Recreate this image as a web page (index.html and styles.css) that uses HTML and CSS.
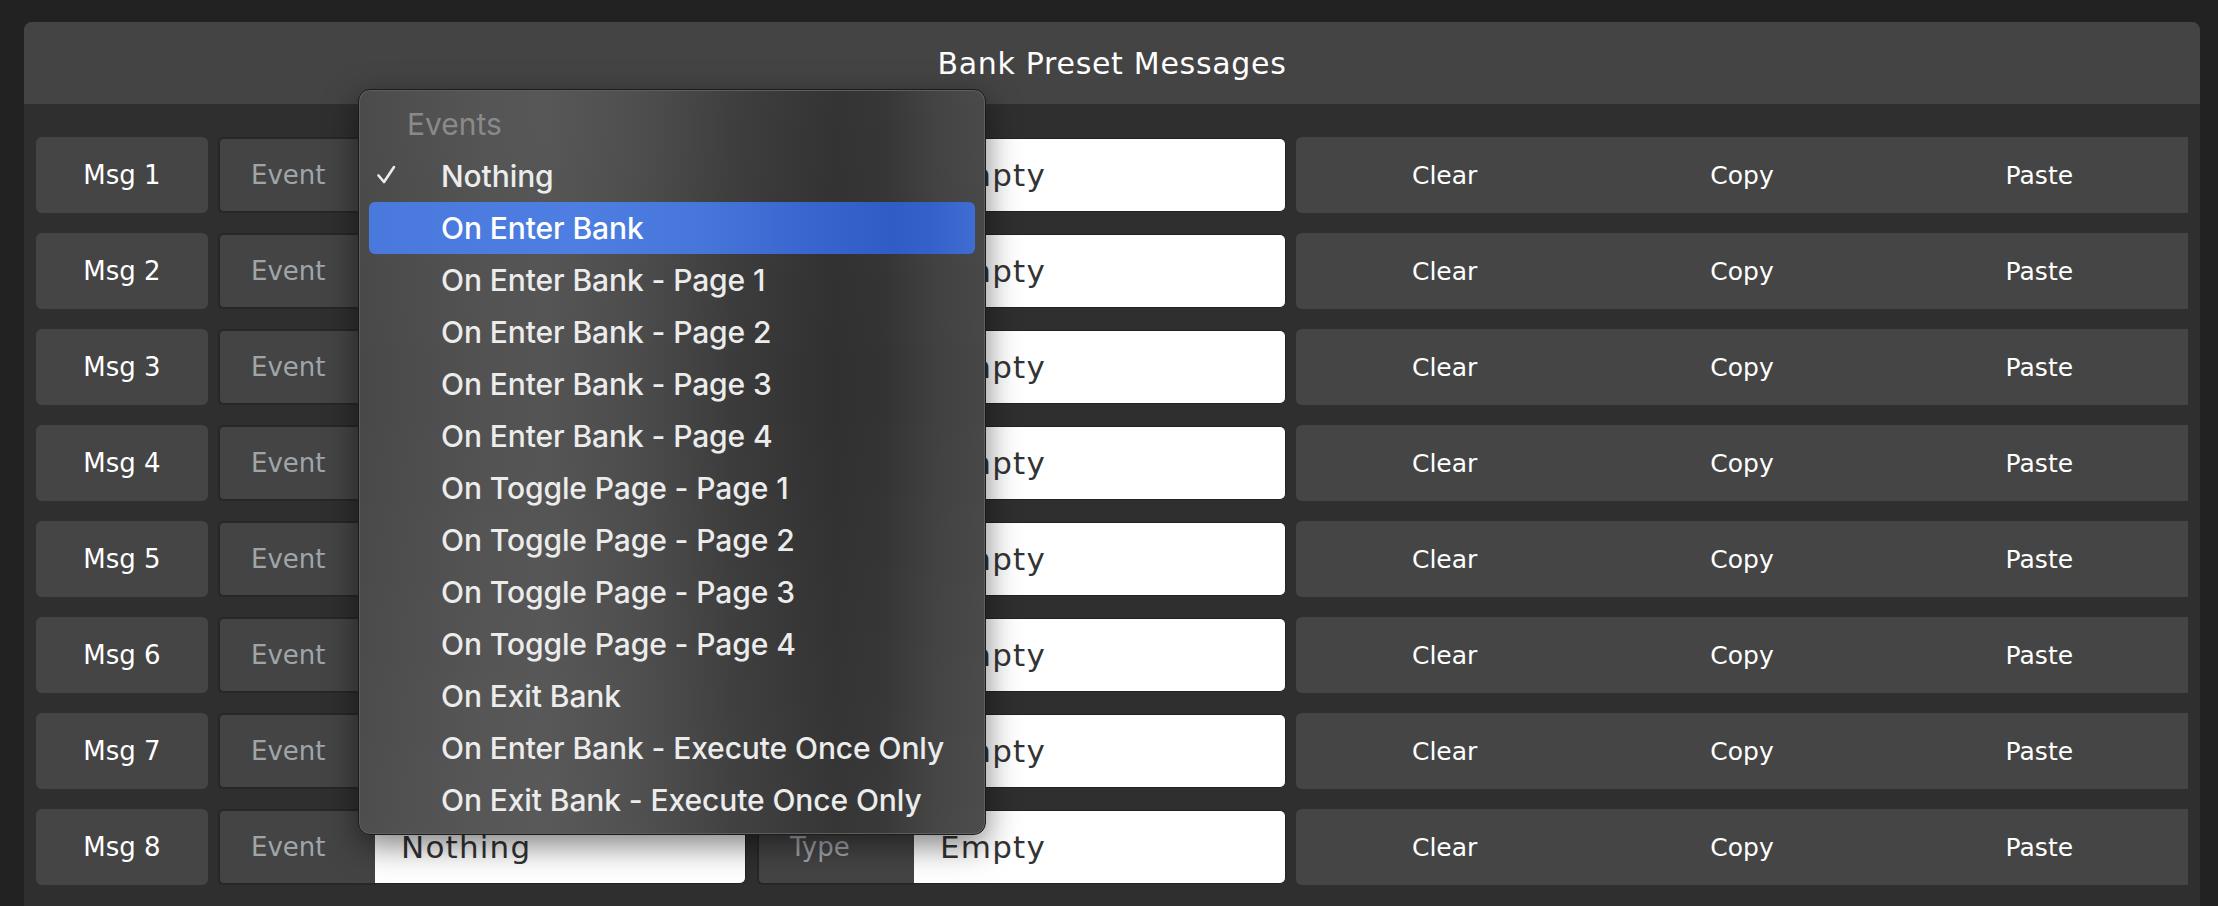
FILE: index.html
```html
<!DOCTYPE html>
<html>
<head>
<meta charset="utf-8">
<title>Bank Preset Messages</title>
<link rel="stylesheet" href="styles.css">
</head>
<body>
<div class="panel">
  <div class="panel-header">Bank Preset Messages</div>
  <div class="panel-body">
    <div class="row">
      <div class="msg-btn">Msg 1</div>
      <div class="group group-event"><div class="label">Event</div><div class="field">Nothing</div></div>
      <div class="group group-type"><div class="label">Type</div><div class="field">Empty</div></div>
      <div class="actions"><div class="act">Clear</div><div class="act">Copy</div><div class="act">Paste</div></div>
    </div>
    <div class="row">
      <div class="msg-btn">Msg 2</div>
      <div class="group group-event"><div class="label">Event</div><div class="field">Nothing</div></div>
      <div class="group group-type"><div class="label">Type</div><div class="field">Empty</div></div>
      <div class="actions"><div class="act">Clear</div><div class="act">Copy</div><div class="act">Paste</div></div>
    </div>
    <div class="row">
      <div class="msg-btn">Msg 3</div>
      <div class="group group-event"><div class="label">Event</div><div class="field">Nothing</div></div>
      <div class="group group-type"><div class="label">Type</div><div class="field">Empty</div></div>
      <div class="actions"><div class="act">Clear</div><div class="act">Copy</div><div class="act">Paste</div></div>
    </div>
    <div class="row">
      <div class="msg-btn">Msg 4</div>
      <div class="group group-event"><div class="label">Event</div><div class="field">Nothing</div></div>
      <div class="group group-type"><div class="label">Type</div><div class="field">Empty</div></div>
      <div class="actions"><div class="act">Clear</div><div class="act">Copy</div><div class="act">Paste</div></div>
    </div>
    <div class="row">
      <div class="msg-btn">Msg 5</div>
      <div class="group group-event"><div class="label">Event</div><div class="field">Nothing</div></div>
      <div class="group group-type"><div class="label">Type</div><div class="field">Empty</div></div>
      <div class="actions"><div class="act">Clear</div><div class="act">Copy</div><div class="act">Paste</div></div>
    </div>
    <div class="row">
      <div class="msg-btn">Msg 6</div>
      <div class="group group-event"><div class="label">Event</div><div class="field">Nothing</div></div>
      <div class="group group-type"><div class="label">Type</div><div class="field">Empty</div></div>
      <div class="actions"><div class="act">Clear</div><div class="act">Copy</div><div class="act">Paste</div></div>
    </div>
    <div class="row">
      <div class="msg-btn">Msg 7</div>
      <div class="group group-event"><div class="label">Event</div><div class="field">Nothing</div></div>
      <div class="group group-type"><div class="label">Type</div><div class="field">Empty</div></div>
      <div class="actions"><div class="act">Clear</div><div class="act">Copy</div><div class="act">Paste</div></div>
    </div>
    <div class="row">
      <div class="msg-btn">Msg 8</div>
      <div class="group group-event"><div class="label">Event</div><div class="field">Nothing</div></div>
      <div class="group group-type"><div class="label">Type</div><div class="field">Empty</div></div>
      <div class="actions"><div class="act">Clear</div><div class="act">Copy</div><div class="act">Paste</div></div>
    </div>
  </div>
</div>

<div class="menu">
  <div class="menu-head">Events</div>
  <div class="menu-item checked"><svg class="check" width="20" height="20" viewBox="0 0 20 20"><path d="M2.5 10.5 L8 17 L18 2" fill="none" stroke="#ececec" stroke-width="2.6" stroke-linecap="round" stroke-linejoin="round"/></svg>Nothing</div>
  <div class="menu-item active">On Enter Bank</div>
  <div class="menu-item">On Enter Bank - Page 1</div>
  <div class="menu-item">On Enter Bank - Page 2</div>
  <div class="menu-item">On Enter Bank - Page 3</div>
  <div class="menu-item">On Enter Bank - Page 4</div>
  <div class="menu-item">On Toggle Page - Page 1</div>
  <div class="menu-item">On Toggle Page - Page 2</div>
  <div class="menu-item">On Toggle Page - Page 3</div>
  <div class="menu-item">On Toggle Page - Page 4</div>
  <div class="menu-item">On Exit Bank</div>
  <div class="menu-item">On Enter Bank - Execute Once Only</div>
  <div class="menu-item">On Exit Bank - Execute Once Only</div>
</div>
</body>
</html>
```

FILE: styles.css
```css
html, body {
  margin: 0;
  padding: 0;
  overflow: hidden;
}
body {
  background: #222222;
  font-family: "DejaVu Sans", "Open Sans", sans-serif;
  height: 906px;
  position: relative;
}
.panel {
  margin: 22px 18px 0 24px;
  height: 884px;
  background: #2f2f2f;
  border-radius: 8px 8px 0 0;
  overflow: hidden;
}
.panel-header {
  height: 82px;
  background: #444444;
  color: #ffffff;
  font-size: 30px;
  letter-spacing: 0.7px;
  display: flex;
  align-items: center;
  justify-content: center;
}
.panel-body {
  padding: 33px 12px 0 12px;
  display: flex;
  flex-direction: column;
  gap: 20px;
}
.row {
  display: flex;
  height: 76px;
}
.msg-btn {
  width: 172px;
  margin-right: 10px;
  background: #454545;
  border-radius: 6px;
  color: #ffffff;
  font-size: 26px;
  display: flex;
  align-items: center;
  justify-content: center;
}
.group {
  display: flex;
}
.group-event {
  width: 528px;
  margin-right: 11px;
}
.group-type {
  width: 529px;
  margin-right: 10px;
}
.label {
  box-sizing: border-box;
  width: 157px;
  padding-left: 31px;
  background: #444444;
  border: 2px solid #272727;
  border-right: none;
  border-radius: 6px 0 0 6px;
  color: #a0a5aa;
  font-size: 26px;
  display: flex;
  align-items: center;
}
.field {
  box-sizing: border-box;
  flex: 1;
  background: #ffffff;
  border: 1px solid #222222;
  border-left: none;
  border-radius: 0 6px 6px 0;
  margin: 1px 0;
  color: #333333;
  font-size: 31px;
  letter-spacing: 1.2px;
  padding-left: 26px;
  display: flex;
  align-items: center;
}
.actions {
  flex: 1;
  display: flex;
  background: #454545;
  border-radius: 6px 0 0 6px;
}
.act {
  flex: 1;
  color: #ffffff;
  font-size: 25px;
  display: flex;
  align-items: center;
  justify-content: center;
}
.menu {
  position: absolute;
  left: 358px;
  top: 89px;
  width: 628px;
  box-sizing: border-box;
  padding: 8px 0 8px 0;
  border-radius: 12px;
  border: 1px solid #1c1c1c;
  box-shadow: inset 0 0 0 1px #5e5e5e, 0 10px 32px rgba(0, 0, 0, 0.5);
  background:
    linear-gradient(180deg, rgba(255,255,255,0.02) 0%, rgba(0,0,0,0) 40%, rgba(255,255,255,0.03) 100%),
    linear-gradient(90deg, #484848 0%, #525252 20%, #545454 30%, #4b4b4b 45%, #3b3b3b 60%, #303030 76%, #333333 84%, #404040 92%, #474747 100%);
  font-family: Inter, "Noto Sans", sans-serif;
  color: #e8e8e8;
}
.menu-head {
  height: 52px;
  padding-left: 48px;
  display: flex;
  align-items: center;
  font-size: 30px;
  color: #8a8a8a;
}
.menu-item {
  position: relative;
  height: 52px;
  padding-left: 82px;
  display: flex;
  align-items: center;
  font-size: 30px;
  font-weight: 500;
  letter-spacing: -0.1px;
  color: #ececec;
}
.menu-item.active {
  margin: 0 10px;
  padding-left: 72px;
  border-radius: 6px;
  color: #ffffff;
  background: linear-gradient(90deg, #4a79dd 0%, #4e7ee1 35%, #4676da 55%, #3a66cf 72%, #2f5cc5 86%, #3462ca 93%, #3f6dd3 100%);
}
.check {
  position: absolute;
  left: 17px;
  top: 15px;
}
```
